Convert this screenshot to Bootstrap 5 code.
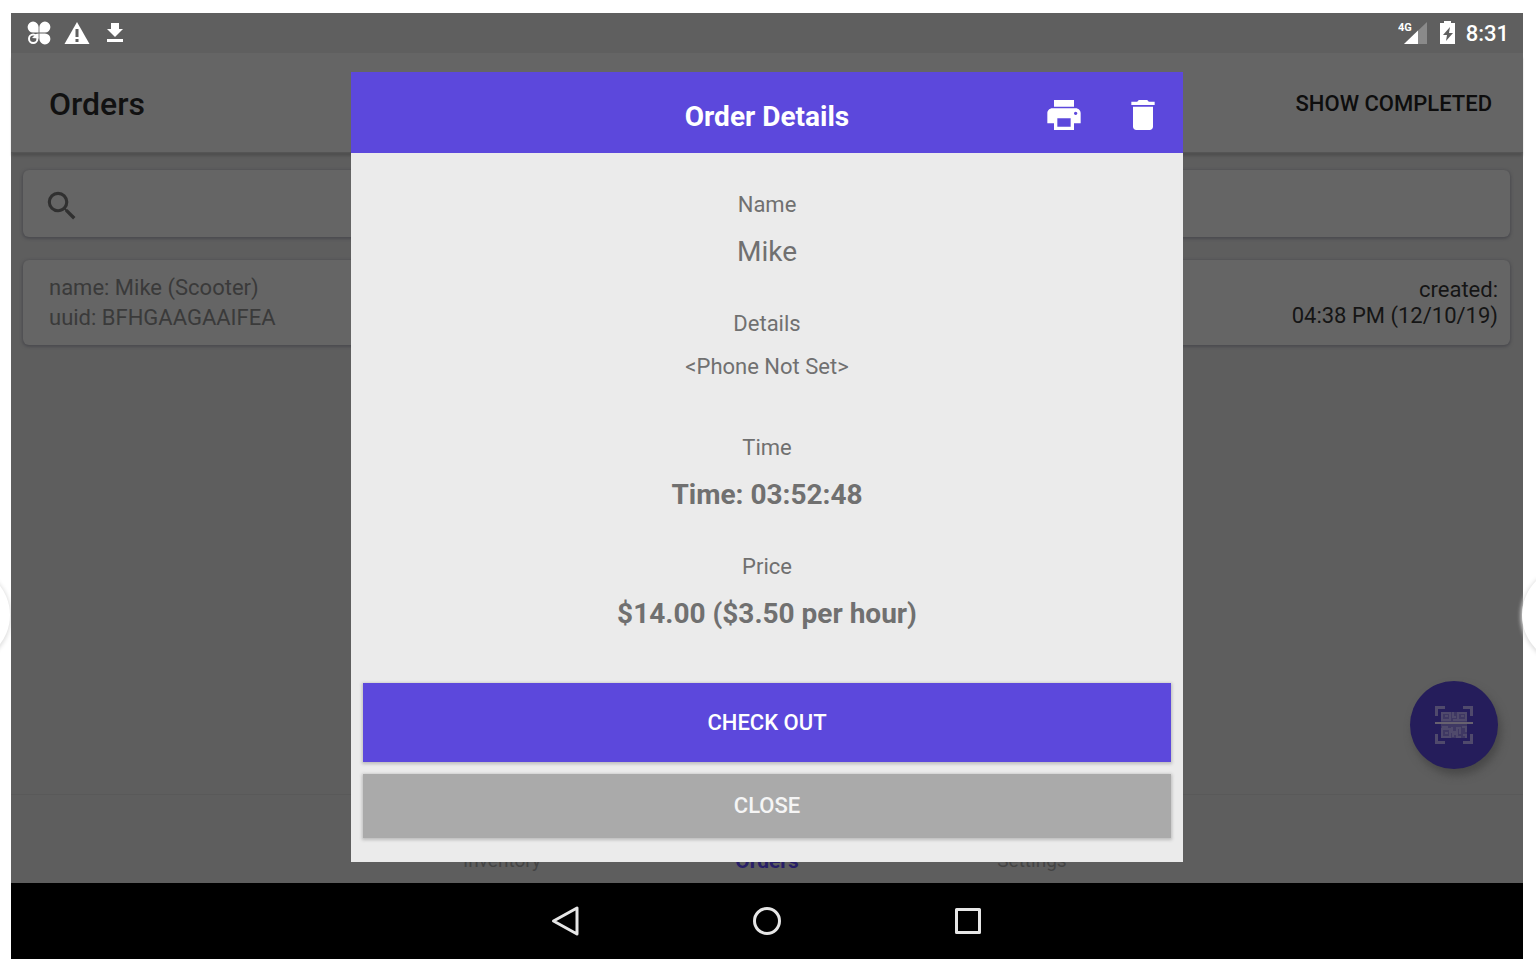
<!DOCTYPE html>
<html lang="en">
<head>
<meta charset="utf-8">
<meta name="viewport" content="width=device-width, initial-scale=1">
<title>Orders</title>
<link rel="stylesheet" href="https://cdn.jsdelivr.net/npm/bootstrap@5.3.0/dist/css/bootstrap.min.css">
<style>
  body { font-family: Roboto, "Liberation Sans", sans-serif; font-size: 22px; line-height: 26px; background: #fff; color: #3a3a3a; overflow: hidden; }
  button { font-weight: 500; }
  svg { display: block; flex: none; }
  .stage { padding: 13px 13px 21px 11px; overflow: hidden; }
  .status { height: 40px; padding: 0 14px 0 16px; background: #5f5f5f; color: #fff; font-weight: 500; }
  .battery { margin-left: 11px; }
  .clock { margin-left: 9px; padding-top: 2px; }
  .screen { background: #5e5e5e; }
  .app-head { height: 100px; padding: 3px 31px 0 38px; background: #656565; border-bottom: 1px solid #555; box-shadow: 0 4px 2px -1px #505050; }
  .app-head h1 { font-size: 32px; line-height: 34px; font-weight: 500; color: #111; }
  .flat { border: 0; background: none; padding: 0; }
  .show-done { color: #0d0d0d; }
  .content-area { padding: 17px 13px 0 12px; }
  .panel { background: #656565; border-radius: 6px; box-shadow: 0 1px 3px 1px #4b4b4f; }
  .search { height: 67px; padding: 4px 20px 0; margin-bottom: 23px; color: #303030; }
  .search input { border: 0; background: none; outline: 0; color: #111; }
  .order { height: 85px; padding: 0 12px 0 26px; }
  .order-id { line-height: 30px; }
  .order-date { color: #151515; }
  .fab { right: 25px; bottom: 25px; width: 88px; height: 88px; border: 0; border-radius: 50%; background: #251d5b; box-shadow: 3px 6px 8px #484848; }
  .tabs { height: 89px; padding-bottom: 9px; border-top: 1px solid #595959; }
  .tabs a { width: 265px; font-size: 19px; color: #444; text-decoration: none; }
  .tabs a.on { font-size: 21px; color: #281f68; font-weight: 700; }
  .sys { height: 76px; gap: 161px; background: #000; }
  .overlay { padding-bottom: 2px; }
  .dialog { width: 55%; background: #ebebeb; color: #707070; }
  .dialog-head { height: 81px; padding: 0 20px; background: #5c48dc; color: #fff; }
  .dialog-head h2 { font-size: 28px; line-height: 34px; font-weight: 700; padding-top: 8px; }
  .tools { gap: 39px; padding-top: 4px; }
  .facts { padding: 39px 0 52px; }
  .facts dt { font-weight: 400; margin-bottom: 17px; }
  .facts dd { margin: 0 0 42px; }
  .facts dd:last-child { margin: 0; }
  .big { font-size: 28px; line-height: 34px; }
  .phone { padding-bottom: 13px; }
  .acts { padding: 0 12px 24px; gap: 12px; }
  .act { border: 0; color: #fff; box-shadow: 0 1px 3px 1px #bcbcbc; }
  .act-main { height: 79px; background: #5c48dc; }
  .act-close { height: 64px; background: #aaa; color: #f5f5f5; }
  .slide-btn { top: 567px; width: 96px; height: 96px; border: 0; border-radius: 50%; background: #fff; box-shadow: 0 1px 4px 1px #ddd; }
  .slide-prev { left: -86px; }
  .slide-next { right: -82px; }
</style>
</head>
<body>
<div class="stage position-relative min-vh-100 d-flex flex-column">
  <button class="slide-btn slide-prev position-absolute" aria-label="Previous"></button>
  <div class="flex-grow-1 d-flex flex-column position-relative">
    <div class="status d-flex align-items-center">
      <svg width="24" height="24" viewBox="0 0 24 24" fill="#fff"><path d="M11.600 11.600H6a5.500 5.500 0 1 1 5.600-5.600zM12.400 11.600V6A5.500 5.500 0 1 1 18 11.600zM12.400 12.400H18a5.500 5.500 0 1 1-5.600 5.600z"/><circle cx="6.200" cy="17.800" r="4.200" fill="none" stroke="#fff" stroke-width="2"/><path d="M5 17l4-4 2.600-.6v5z"/></svg>
      <svg class="ms-2" width="36" height="28" viewBox="0 0 36 28"><path d="M18 3L30.500 25H5.500z" fill="#fff"/><path d="M16.500 10h3v8h-3zM16.500 20h3v3h-3z" fill="#5f5f5f"/></svg>
      <svg class="ms-2" width="24" height="24" viewBox="0 0 24 24" fill="#fff"><path d="M8 2h8v6h4l-8 8-8-8h4zM4 18h16v3H4z"/></svg>
      <svg class="ms-auto" width="30" height="28" viewBox="0 0 30 28"><path d="M29 3v22H6z" fill="#8a8a8a"/><path d="M20 11.500V25H6z" fill="#fff"/><text x="0" y="12" font-size="11" font-weight="700" fill="#fff">4G</text></svg>
      <svg class="battery" width="18" height="28" viewBox="0 0 18 28"><path d="M5 2h7v2h4v21H1V4h4z" fill="#fff"/><path d="M11 8l-7 8h4l-1 6 7-8h-4z" fill="#5f5f5f"/></svg>
      <span class="clock">8:31</span>
    </div>

    <div class="screen flex-grow-1 d-flex flex-column position-relative">
      <header class="app-head d-flex align-items-center justify-content-between">
        <h1 class="m-0">Orders</h1>
        <button class="flat show-done">SHOW COMPLETED</button>
      </header>
      <main class="content-area flex-grow-1 position-relative">
        <label class="panel search d-flex align-items-center">
          <svg width="38" height="38" viewBox="0 0 24 24" fill="currentColor"><path d="M15.500 14h-.79l-.28-.27A6.470 6.470 0 0 0 16 9.500 6.500 6.500 0 1 0 9.500 16c1.610 0 3.090-.59 4.230-1.570l.27.28v.79l5 4.990L20.490 19l-4.990-5zm-6 0C7.010 14 5 11.990 5 9.500S7.010 5 9.500 5 14 7.010 14 9.500 11.990 14 9.500 14z"/></svg>
          <input class="flex-grow-1" type="text" aria-label="Search orders">
        </label>
        <div class="panel order d-flex align-items-center justify-content-between">
          <div class="order-id">name: Mike (Scooter)<br>uuid: BFHGAAGAAIFEA</div>
          <div class="order-date text-end">created:<br>04:38 PM (12/10/19)</div>
        </div>
        <button class="fab position-absolute d-flex align-items-center justify-content-center" aria-label="Scan code">
          <svg width="40" height="40" viewBox="0 0 40 40" fill="none" stroke="#504a6c"><path stroke-width="3" d="M2.500 11V2.500H11M29 2.500h8.500V11M37.500 29v8.500H29M11 37.500H2.500V29"/><path fill="#3f3863" stroke="none" d="M7 7h26v26H7z"/><path stroke-width="2" d="M8 8h8v7H8zM24 8h8v7h-8zM8 24h8v8H8zM19 7v5h3M19 15h4M11 11h3M27 11h3M8 22h6M18 22v5h5v-4h3v6M28 22h4v5M19 32v-3h4v3h4M29 30h3v3M11 28h3"/><path stroke="#67616f" stroke-width="2" d="M1 18h38"/></svg>
        </button>
      </main>
      <nav class="tabs d-flex justify-content-center align-items-end text-center">
        <a href="#">Inventory</a><a class="on" href="#">Orders</a><a href="#">Settings</a>
      </nav>

      <div class="overlay position-absolute top-0 start-0 w-100 h-100 d-flex align-items-center justify-content-center">
        <section class="dialog" role="dialog" aria-labelledby="dialog-title">
          <div class="dialog-head d-flex align-items-center">
            <div class="col"></div>
            <h2 class="m-0" id="dialog-title">Order Details</h2>
            <div class="col d-flex justify-content-end tools">
              <button class="flat" aria-label="Print"><svg width="40" height="40" viewBox="0 0 24 24" fill="#fff"><path d="M19 8H5c-1.660 0-3 1.340-3 3v6h4v4h12v-4h4v-6c0-1.660-1.340-3-3-3zm-3 11H8v-5h8v5zm3-7c-.55 0-1-.45-1-1s.45-1 1-1 1 .45 1 1-.45 1-1 1zm-1-9H6v4h12V3z"/></svg></button>
              <button class="flat" aria-label="Delete"><svg width="40" height="40" viewBox="0 0 24 24" fill="#fff"><path d="M6 19c0 1.100.9 2 2 2h8c1.100 0 2-.9 2-2V7H6v12zM19 4h-3.500l-1-1h-5l-1 1H5v2h14V4z"/></svg></button>
            </div>
          </div>
          <dl class="facts m-0 text-center">
            <dt>Name</dt><dd class="big">Mike</dd>
            <dt>Details</dt><dd class="phone">&lt;Phone Not Set&gt;</dd>
            <dt>Time</dt><dd class="big fw-bold">Time: 03:52:48</dd>
            <dt>Price</dt><dd class="big fw-bold">$14.00 ($3.50 per hour)</dd>
          </dl>
          <div class="acts d-flex flex-column">
            <button class="act act-main">CHECK OUT</button>
            <button class="act act-close">CLOSE</button>
          </div>
        </section>
      </div>
    </div>

    <div class="sys d-flex align-items-center justify-content-center">
      <button class="flat" aria-label="Back"><svg width="40" height="40" viewBox="0 0 40 40" fill="none" stroke="#e6e6e6" stroke-width="3" stroke-linejoin="round"><path d="M31 7v26L7.500 20z"/></svg></button>
      <button class="flat" aria-label="Home"><svg width="40" height="40" viewBox="0 0 40 40" fill="none" stroke="#e6e6e6" stroke-width="3"><circle cx="20" cy="20" r="12.500"/></svg></button>
      <button class="flat" aria-label="Recent apps"><svg width="40" height="40" viewBox="0 0 40 40" fill="none" stroke="#e6e6e6" stroke-width="3" stroke-linejoin="round"><path d="M8.500 8.500h23v23h-23z"/></svg></button>
    </div>
  </div>
  <button class="slide-btn slide-next position-absolute" aria-label="Next"></button>
</div>
<script src="https://cdn.jsdelivr.net/npm/bootstrap@5.3.0/dist/js/bootstrap.bundle.min.js"></script>
</body>
</html>
